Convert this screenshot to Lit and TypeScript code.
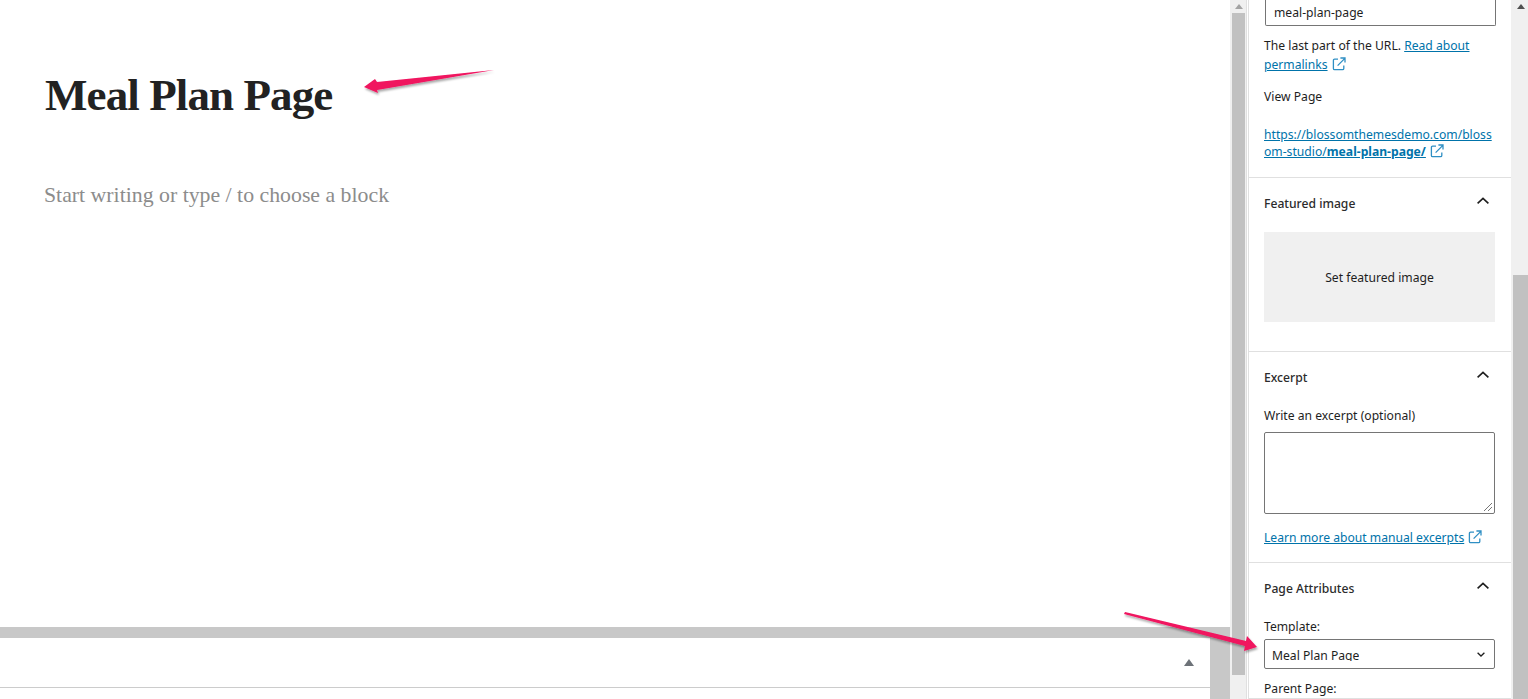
import { LitElement, html, css, svg } from "lit";
import { customElement } from "lit/decorators.js";

const ext = html`<svg class="ext" width="14" height="14" viewBox="0 0 14 14" fill="none" stroke="#2f8fc4" stroke-width="1.3"><path d="M6 2.2H2.6a1.2 1.2 0 0 0-1.2 1.2v8a1.2 1.2 0 0 0 1.2 1.2h8a1.2 1.2 0 0 0 1.2-1.2V8.4"/><path d="M5.6 8.6 12.6 1.6M8.4 1h4.6v4.6" /></svg>`;
const chev = html`<svg class="chev" width="14" height="9" viewBox="0 0 14 9" fill="none" stroke="#1e1e1e" stroke-width="1.6"><path d="M1.6 7.4 7 2.4l5.4 5"/></svg>`;

@customElement("app-root")
export class AppRoot extends LitElement {
  static styles = css`
    :host { display: block; position: relative; width: 1528px; height: 699px; overflow: hidden; background: #fff;
      font-family: "Noto Sans", "Open Sans", sans-serif; font-size: 12.15px; color: #1e1e1e; }
    .page { display: grid; grid-template-columns: 1230px 18px 263px 17px; height: 699px; }
    .main { display: flex; flex-direction: column; height: 699px; }
    .canvas { flex: 0 0 627px; padding: 65px 0 0 45px; box-sizing: border-box; }
    .title { margin: 0; font-family: "Liberation Serif", serif; font-weight: 700; font-size: 45px; line-height: 60px; color: #222; letter-spacing: -0.9px; white-space: nowrap; }
    .placeholder { margin: 55px 0 0 -1px; font-family: "Liberation Serif", serif; font-size: 21.8px; line-height: 30px; color: #8c8c8c; white-space: nowrap; }
    .hbar { flex: 0 0 11px; background: #c8c8c8; }
    .panel { flex: 0 0 50px; display: flex; }
    .panel-body { width: 1210px; box-sizing: border-box; border-bottom: 1px solid #ccc; display: flex; justify-content: flex-end; align-items: center; padding-right: 16px; }
    .tri { width: 0; height: 0; border-left: 5px solid transparent; border-right: 5px solid transparent; border-bottom: 7px solid #6d7278; }
    .panel-side { width: 20px; background: #c8c8c8; }
    .rest { flex: 1; display: flex; }
    .rest .w { width: 1210px; background: #fff; }
    .rest .s { width: 20px; background: #c8c8c8; }
    .sb { background: #f0f0f0; display: flex; flex-direction: column; align-items: center; }
    .sb1 { width: 15px; border-right: 1px solid #e0e0e0; margin-right: 2px; padding-left: 1px; }
    .arrow { flex: 0 0 13px; display: flex; align-items: center; justify-content: center; }
    .arrow i { width: 0; height: 0; border-left: 4px solid transparent; border-right: 4px solid transparent; border-bottom: 5px solid #a3a3a3; }
    .arrow.dark i { border-bottom-color: #505050; }
    .thumb1 { width: 13px; height: 662px; background: #c1c1c1; }
    .sb2 { padding-left: 2px; }
    .gap { flex: 0 0 262px; }
    .thumb2 { width: 15px; flex: 1; background: #c1c1c1; }
    .side { border-left: 1px solid #e0e0e0; box-sizing: border-box; background: #fff; }
    .sec { box-sizing: border-box; border-bottom: 1px solid #e0e0e0; padding: 0 16px 0 15px; position: relative; }
    .s1 { height: 178px; }
    .s2 { height: 174px; }
    .s3 { height: 211px; }
    .slug { box-sizing: border-box; height: 26px; width: 231px; margin-left: 1px; border: 1px solid #757575; border-top: 0; border-radius: 0 0 2px 2px; padding: 5px 0 0 8px; line-height: 16px; }
    .line { line-height: 19px; white-space: nowrap; }
    .perm { margin-top: 10px; }
    .view { margin-top: 13px; }
    .url { margin-top: 20px; line-height: 17px; }
    .url b { font-weight: 700; }
    a { color: #0073aa; text-decoration: underline; }
    .ext { vertical-align: -2px; margin-left: 4px; }
    .head { display: flex; justify-content: space-between; align-items: center; height: 50px; font-weight: 500; color: #2c2c2c; padding-top: 1px; box-sizing: border-box; }
    .chev { margin-right: 5px; margin-bottom: 7px; }
    .img { height: 90px; width: 231px; background: #f0f0f0; display: flex; align-items: center; justify-content: center; margin-top: 4px; }
    .lab { line-height: 18px; }
    .ex-lab { margin-top: 5px; }
    .ta { box-sizing: border-box; height: 82px; width: 231px; margin-top: 7px; border: 1px solid #757575; border-radius: 2px; position: relative; }
    .grip { position: absolute; right: 1px; bottom: 1px; }
    .learn { margin-top: 14px; line-height: 19px; white-space: nowrap; }
    .tmpl { margin-top: 5px; }
    .sel { box-sizing: border-box; height: 30px; width: 231px; margin-top: 3px; border: 1px solid #757575; border-radius: 2px; display: flex; justify-content: space-between; align-items: center; padding: 0 9px 0 7px; }
    .sel span { display: block; height: 13px; line-height: 16px; overflow: hidden; }
    .parent { margin-top: 11px; }
    .over { position: absolute; left: 0; top: 0; pointer-events: none; }
  `;

  render() {
    return html`<div class="page">
      <div class="main">
        <div class="canvas">
          <h1 class="title">Meal Plan Page</h1>
          <p class="placeholder">Start writing or type / to choose a block</p>
        </div>
        <div class="hbar"></div>
        <div class="panel"><div class="panel-body"><span class="tri"></span></div><div class="panel-side"></div></div>
        <div class="rest"><div class="w"></div><div class="s"></div></div>
      </div>
      <div class="sb sb1"><div class="arrow"><i></i></div><div class="thumb1"></div></div>
      <div class="side">
        <div class="sec s1">
          <div class="slug">meal-plan-page</div>
          <div class="line perm">The last part of the URL. <a href="#">Read about</a></div>
          <div class="line"><a href="#">permalinks</a>${ext}</div>
          <div class="line view">View Page</div>
          <div class="url"><a href="#">https://blossomthemesdemo.com/bloss<br>om-studio/<b>meal-plan-page/</b></a>${ext}</div>
        </div>
        <div class="sec s2">
          <div class="head"><span>Featured image</span>${chev}</div>
          <div class="img">Set featured image</div>
        </div>
        <div class="sec s3">
          <div class="head"><span>Excerpt</span>${chev}</div>
          <div class="lab ex-lab">Write an excerpt (optional)</div>
          <div class="ta"><svg class="grip" width="10" height="10" viewBox="0 0 10 10" stroke="#777" stroke-width="1"><path d="M1 9 9 1M5 9 9 5"/></svg></div>
          <div class="learn"><a href="#">Learn more about manual excerpts</a>${ext}</div>
        </div>
        <div class="sec">
          <div class="head"><span>Page Attributes</span>${chev}</div>
          <div class="lab tmpl">Template:</div>
          <div class="sel"><span>Meal Plan Page</span><svg width="8" height="5" viewBox="0 0 8 5" fill="none" stroke="#1e1e1e" stroke-width="1.3"><path d="M.6.7 4 4 7.4.7"/></svg></div>
          <div class="lab parent">Parent Page:</div>
        </div>
      </div>
      <div class="sb sb2"><div class="arrow dark"><i></i></div><div class="gap"></div><div class="thumb2"></div></div>
    </div>
    <svg class="over" width="1528" height="699" viewBox="0 0 1528 699">
      <defs><filter id="sh" x="-10%" y="-50%" width="120%" height="200%"><feDropShadow dx="1" dy="2" stdDeviation="1.2" flood-color="#000" flood-opacity=".35"/></filter></defs>
      ${svg`<path filter="url(#sh)" fill="#f0135f" d="M494 70 377 82 375 79 364 87 378 93 377 90Z"/>
      <path filter="url(#sh)" fill="#f0135f" d="M1125 612 1246 641 1247 636 1257 647 1244 651 1245 646 1124 614Z"/>`}
    </svg>`;
  }
}
